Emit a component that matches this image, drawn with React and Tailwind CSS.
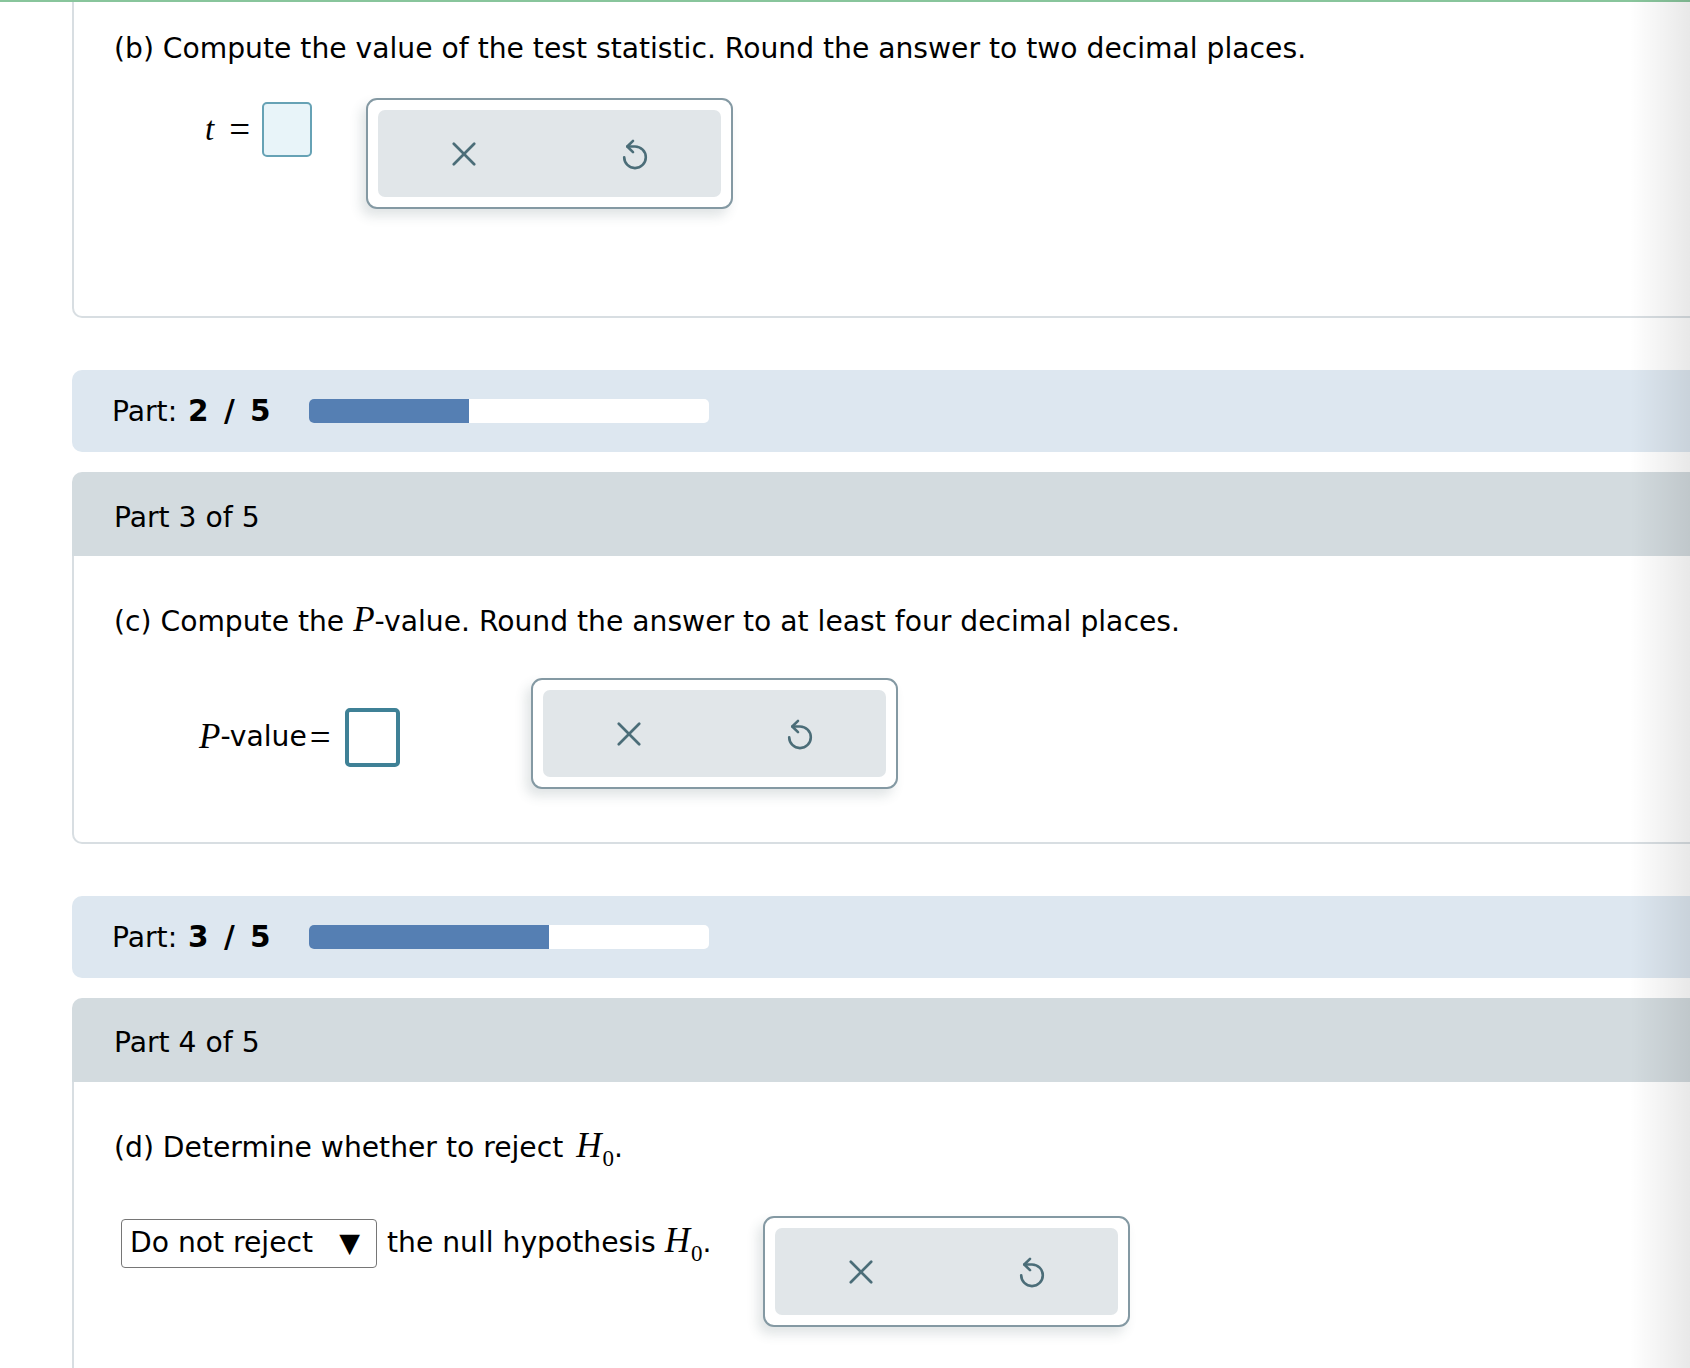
import React from "react";

// Clear (×) glyph used in the answer action panels
function ClearIcon() {
  return (
    <svg width="24" height="24" viewBox="0 0 24 24" fill="none" stroke="#4b6d78" strokeWidth="2.7" strokeLinecap="round">
      <line x1="1.8" y1="1.8" x2="22.2" y2="22.2" />
      <line x1="22.2" y1="1.8" x2="1.8" y2="22.2" />
    </svg>
  );
}

// Circular "undo" arrow: arc open on the upper-left with a left-pointing head at the top
function UndoIcon() {
  return (
    <svg width="28" height="32" viewBox="0 0 28 32" fill="none" stroke="#4b6d78" strokeWidth="2.6" strokeLinecap="round" strokeLinejoin="round">
      <path d="M12 2.8 L6.3 8.5 L12 14.2" />
      <path d="M6.3 8.5 H14 A10.8 10.8 0 1 1 3.2 19.3" />
    </svg>
  );
}

function ActionPanel({ className = "" }) {
  return (
    <div
      className={`h-[111px] w-[367px] shrink-0 rounded-[11px] border-2 border-[#8499a3] bg-white p-[10px] shadow-[-5px_7px_12px_rgba(60,85,95,0.16)] ${className}`}
    >
      <div className="flex h-full w-full rounded-[7px] bg-[#e1e6e9]">
        <button type="button" className="flex flex-1 items-center justify-center">
          <ClearIcon />
        </button>
        <button type="button" className="flex flex-1 items-center justify-center">
          <UndoIcon />
        </button>
      </div>
    </div>
  );
}

function ProgressBand({ done }) {
  return (
    <div className="mt-[52px] flex h-[82px] items-center rounded-l-[10px] bg-[#dde7f0] pl-[40px]">
      <div className="w-[197px] shrink-0 leading-[34px]">
        Part: <span className="ml-[2px] text-[29.5px] font-bold [word-spacing:5px]">{done} / 5</span>
      </div>
      <div className="h-[24px] w-[400px] overflow-hidden rounded-[5px] bg-white">
        <div className="h-full bg-[#557fb3]" style={{ width: `${(done / 5) * 400}px` }} />
      </div>
    </div>
  );
}

function PartHeader({ n, shift }) {
  return (
    <div className={`mt-[20px] flex h-[84px] items-center rounded-tl-[10px] bg-[#d3dbdf] pl-[42px] leading-[34px] ${shift}`}>
      Part {n} of 5
    </div>
  );
}

function Hnull({ gap = "" }) {
  return (
    <span className={`font-['Liberation_Serif',serif] text-[35px] leading-[0] ${gap}`}>
      <span className="italic">H</span>
      <span className="relative top-[9px] ml-[1px] text-[23px]">0</span>
    </span>
  );
}

export default function App() {
  return (
    <div className="relative h-[1368px] w-[1690px] overflow-hidden bg-white font-['DejaVu_Sans',sans-serif] text-[28.2px] text-black">
      <div className="h-[2px] bg-[#88c59c]" />

      <div className="pl-[72px]">
        {/* Part 2 body */}
        <section className="h-[316px] rounded-bl-[10px] border-b-2 border-l-2 border-[#d8dee2] pl-[40px] pt-[30px]">
          <p className="leading-[34px]">
            (b) Compute the value of the test statistic. Round the answer to two decimal places.
          </p>
          <div className="mt-[32px] flex items-start">
            <div className="ml-[91px] mt-[4px] flex h-[55px] items-center">
              <div className="flex w-[57px] items-center justify-between pr-[12px] font-['Liberation_Serif',serif]">
                <span className="text-[33px] italic">t</span>
                <span className="text-[37px] leading-none">=</span>
              </div>
              <div className="h-[55px] w-[50px] rounded-[5px] border-2 border-[#66a2b5] bg-[#e8f4f9]" />
            </div>
            <ActionPanel className="ml-[54px]" />
          </div>
        </section>

        <ProgressBand done={2} />
        <PartHeader n={3} shift="pt-[8px]" />

        {/* Part 3 body */}
        <section className="rounded-bl-[10px] border-b-2 border-l-2 border-[#d8dee2] pb-[53px] pl-[40px] pt-[49px]">
          <p className="leading-[34px]">
            (c) Compute the{" "}
            <span className="font-['Liberation_Serif',serif] text-[35px] italic leading-[0]">P</span>-value. Round the
            answer to at least four decimal places.
          </p>
          <div className="mt-[39px] flex items-start">
            <div className="ml-[85px] mt-[30px] flex h-[59px] items-center">
              <div className="flex w-[146px] items-center">
                <span className="font-['Liberation_Serif',serif] text-[35px] italic">P</span>
                <span>-value</span>
                <span className="ml-[3px] font-['Liberation_Serif',serif] text-[37px] leading-none">=</span>
              </div>
              <div className="h-[59px] w-[55px] rounded-[5px] border-[4px] border-[#3f8196] bg-white" />
            </div>
            <ActionPanel className="ml-[131px]" />
          </div>
        </section>

        <ProgressBand done={3} />
        <PartHeader n={4} shift="pt-[5px]" />

        {/* Part 4 body */}
        <section className="h-[300px] border-l-2 border-[#d8dee2] pl-[40px] pt-[49px]">
          <p className="leading-[34px]">
            (d) Determine whether to reject <Hnull gap="ml-[4px]" />.
          </p>
          <div className="mt-[51px] flex items-start">
            <div className="ml-[7px] mt-[3px] flex h-[49px] w-[256px] items-center justify-between rounded-[4px] border-[1.5px] border-[#767676] pl-[8px] pr-[16px]">
              <span>Do not reject</span>
              <span className="text-[27px]">▼</span>
            </div>
            <div className="mt-[3px] flex h-[49px] w-[386px] items-center pl-[10px]">
              <span>
                the null hypothesis <Hnull />.
              </span>
            </div>
            <ActionPanel />
          </div>
        </section>
      </div>

      {/* soft scroll shadow along the right edge */}
      <div className="pointer-events-none absolute right-0 top-0 h-full w-[60px] bg-linear-to-r from-transparent to-[rgba(0,0,0,0.09)]" />
    </div>
  );
}
